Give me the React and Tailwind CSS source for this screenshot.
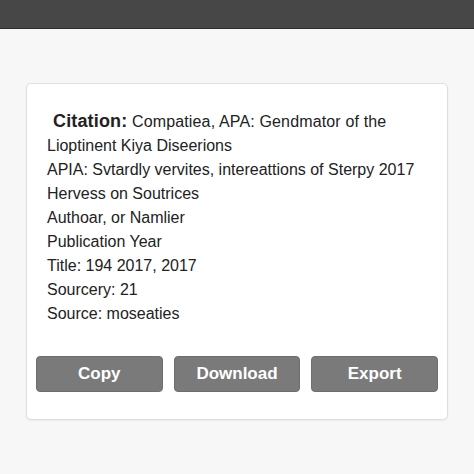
export default function App() {
  const lines = [
    "Lioptinent Kiya Diseerions",
    "APIA: Svtardly vervites, intereattions of Sterpy 2017",
    "Hervess on Soutrices",
    "Authoar, or Namlier",
    "Publication Year",
    "Title: 194 2017, 2017",
    "Sourcery: 21",
    "Source: moseaties",
  ];

  return (
    <div className="w-[474px] h-[474px] bg-[#f7f7f7] font-['Liberation_Sans',Arial,sans-serif] flex flex-col">
      <div className="h-[29px] bg-[#474747] border-b border-[#2e2e2e]" />
      <div className="px-[26px] pt-[54px]">
        <div className="bg-white border border-[#dedede] rounded-[5px] shadow-[0_1px_2px_rgba(0,0,0,0.06)] pt-[26px] pb-[27px]">
          <div className="px-[20px] text-[16px] leading-[24px] text-[#222]">
            <p className="h-[24px] pl-[6px] tracking-[0.15px]">
              <span className="font-bold text-[18px] leading-[1]">Citation:</span> Compatiea, APA: Gendmator of the
            </p>
            {lines.map((line) => (
              <p key={line}>{line}</p>
            ))}
          </div>
          <div className="mt-[30px] px-[9px] grid grid-cols-3 gap-[11px]">
            {["Copy", "Download", "Export"].map((label) => (
              <button
                key={label}
                className="h-[36px] rounded-[4px] bg-[#7a7a7a] border border-[#6e6e6e] text-white font-bold text-[17px]"
              >
                {label}
              </button>
            ))}
          </div>
        </div>
      </div>
    </div>
  );
}
